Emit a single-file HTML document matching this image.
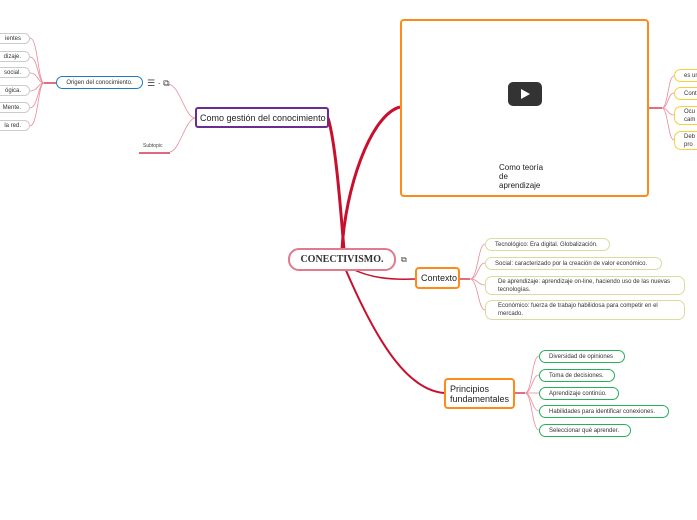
<!DOCTYPE html>
<html><head><meta charset="utf-8"><style>
body{margin:0;width:697px;height:520px;background:#fff;position:relative;overflow:hidden;font-family:"Liberation Sans","DejaVu Sans",sans-serif}
.n{position:absolute;box-sizing:border-box;background:#fff;color:#333;display:flex;align-items:center}
.leaf{font-size:6px;border-radius:7px;padding:0 9px;line-height:8px}
.s{white-space:nowrap}
.y{border:1.3px solid #d9dc9a}
.g{border:1.3px solid #26b05a}
.o{border:1.3px solid #f7cf3a}
.gr{border:1px solid #ccc;font-size:6px;border-radius:0 6px 6px 0;justify-content:flex-end;padding-right:8px}
.big{font-size:9px;border:2px solid #ff8a1a;border-radius:4px;padding:0 4px;color:#222}
</style></head><body>
<svg width="697" height="520" style="position:absolute;left:0;top:0" fill="none">
<g stroke="#c8102e" stroke-width="3">
<path d="M342 250 C345 190 370 115 400 107"/>
<path d="M344 250 C340 200 335 140 328 118"/>
<path d="M345 268 C380 350 410 390 444 393" stroke-width="2"/>
<path d="M350 268 C370 278 390 280 415 279" stroke-width="1.5"/>
</g>
<g stroke="#e98a9a" stroke-width="0.8">
<path d="M195 118 C185 118 180 85 168 84"/><path d="M195 118 C185 120 180 150 170 152"/>
<path d="M44 83 C38 83 38 38 30 38"/><path d="M44 83 C38 83 38 57 30 57"/><path d="M44 83 C38 83 38 73 30 73"/><path d="M44 83 C38 83 38 91 30 91"/><path d="M44 83 C38 83 38 108 30 108"/><path d="M44 83 C38 83 38 126 30 126"/>
<path d="M470 279 C478 279 478 244 485 244"/><path d="M470 279 C478 279 478 263 485 263"/><path d="M470 279 C478 279 478 285 485 285"/><path d="M470 279 C478 279 478 310 485 310"/>
<path d="M525 393 C532 393 532 356 539 356"/><path d="M525 393 C532 393 532 375 539 375"/><path d="M525 393 C532 393 532 393 539 393"/><path d="M525 393 C532 393 532 411 539 411"/><path d="M525 393 C532 393 532 430 539 430"/>
<path d="M662 108 C668 108 668 76 674 76"/><path d="M662 108 C668 108 668 93 674 93"/><path d="M662 108 C668 108 668 115 674 115"/><path d="M662 108 C668 108 668 140 674 140"/>
</g>
<g stroke="#c8102e" stroke-width="1.2">
<path d="M44 83 H56"/><path d="M459 279 H470"/><path d="M514 393 H525"/><path d="M648 108 H662"/><path d="M139 153 H170"/>
</g>
</svg>
<div class="n gr" style="left:-10px;top:33px;width:40px;height:11px">ientes</div>
<div class="n gr" style="left:-10px;top:51px;width:40px;height:11px">dizaje.</div>
<div class="n gr" style="left:-10px;top:67px;width:40px;height:11px">social.</div>
<div class="n gr" style="left:-10px;top:85px;width:40px;height:11px">ógica.</div>
<div class="n gr" style="left:-10px;top:102px;width:40px;height:11px">Mente.</div>
<div class="n gr" style="left:-10px;top:120px;width:40px;height:11px">la red.</div>
<div class="n leaf s" style="left:56px;top:76px;width:87px;height:13px;border:1.3px solid #1f7bbf;justify-content:center;padding:0">Origen del conocimiento.</div>
<div style="position:absolute;left:147px;top:78px;font-size:9px;color:#444">☰ · ⧉</div>
<div style="position:absolute;left:143px;top:143px;font-size:5px;color:#444">Subtopic</div>
<div class="n s" style="left:195px;top:107px;width:134px;height:21px;border:2px solid #6a2c91;border-radius:3px;font-size:9px;padding-left:3px;color:#222">Como gestión del conocimiento</div>
<div class="n" style="left:400px;top:19px;width:249px;height:178px;border:2px solid #ff8a1a;border-radius:4px;display:block">
<div style="position:absolute;left:106px;top:61px;width:34px;height:24px;background:#333;border-radius:5px"><div style="position:absolute;left:13px;top:7px;border-left:9px solid #fff;border-top:5px solid transparent;border-bottom:5px solid transparent"></div></div>
<div style="position:absolute;left:97px;top:142px;font-size:8px;line-height:9px;color:#222">Como teoría<br>de<br>aprendizaje</div></div>
<div class="n leaf o s" style="left:674px;top:69px;width:40px;height:13px">es un</div>
<div class="n leaf o s" style="left:674px;top:87px;width:40px;height:13px">Cont</div>
<div class="n leaf o" style="left:674px;top:106px;width:40px;height:19px">Ocu<br>cam</div>
<div class="n leaf o" style="left:674px;top:131px;width:40px;height:19px">Deb<br>pro</div>
<div class="n s" style="left:288px;top:248px;width:108px;height:23px;border:2px solid #e07a8c;border-radius:11px;justify-content:center;font-family:'Liberation Serif',serif;font-weight:bold;font-size:10px;color:#333">CONECTIVISMO.</div>
<div style="position:absolute;left:401px;top:255px;font-size:8px;color:#444">⧉</div>
<div class="n big s" style="left:415px;top:267px;width:45px;height:22px">Contexto</div>
<div class="n leaf y s" style="left:485px;top:238px;width:125px;height:13px">Tecnológico: Era digital. Globalización.</div>
<div class="n leaf y s" style="left:485px;top:257px;width:177px;height:13px">Social: caracterizado por la creación de valor económico.</div>
<div class="n leaf y" style="left:485px;top:276px;width:200px;height:19px;padding-left:12px">De aprendizaje: aprendizaje on-line, haciendo uso de las nuevas tecnologías.</div>
<div class="n leaf y" style="left:485px;top:300px;width:200px;height:20px;padding-left:12px">Económico: fuerza de trabajo habilidosa para competir en el mercado.</div>
<div class="n big" style="left:444px;top:378px;width:71px;height:31px;line-height:10px">Principios fundamentales</div>
<div class="n leaf g s" style="left:539px;top:350px;width:86px;height:13px">Diversidad de opiniones</div>
<div class="n leaf g s" style="left:539px;top:369px;width:76px;height:13px">Toma de decisiones.</div>
<div class="n leaf g s" style="left:539px;top:387px;width:80px;height:13px">Aprendizaje continúo.</div>
<div class="n leaf g s" style="left:539px;top:405px;width:130px;height:13px">Habilidades para identificar conexiones.</div>
<div class="n leaf g s" style="left:539px;top:424px;width:92px;height:13px">Seleccionar qué aprender.</div>
</body></html>
